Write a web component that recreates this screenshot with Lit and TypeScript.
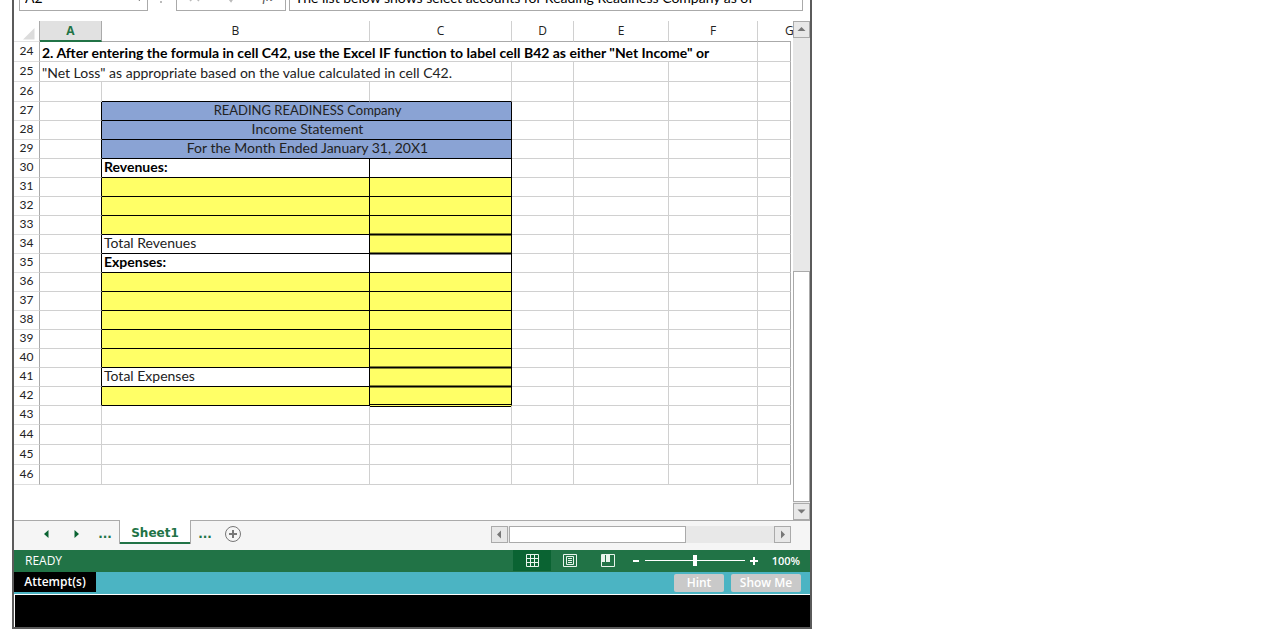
import { LitElement, html, css, svg, nothing } from "lit";
import { customElement } from "lit/decorators.js";

type Line = { n: number; label?: string; bold?: boolean; kind?: string };

const LINES: Line[] = [
  { n: 30, label: "Revenues:", bold: true },
  { n: 31, kind: "fill" },
  { n: 32, kind: "fill" },
  { n: 33, kind: "fill" },
  { n: 34, label: "Total Revenues", kind: "total" },
  { n: 35, label: "Expenses:", bold: true },
  { n: 36, kind: "fill" },
  { n: 37, kind: "fill" },
  { n: 38, kind: "fill" },
  { n: 39, kind: "fill" },
  { n: 40, kind: "fill" },
  { n: 41, label: "Total Expenses", kind: "total" },
  { n: 42, kind: "fill" },
];

// Cells of column C whose upper or lower edge carries a medium rule.
const HEAVY_TOP = new Set([34, 35, 41, 42]);
const HEAVY_BOTTOM = new Set([33, 34, 40, 41]);

const TITLES: [number, string, string][] = [
  [27, "READING READINESS Company", "caps"],
  [28, "Income Statement", ""],
  [29, "For the Month Ended January 31, 20X1", ""],
];

const arrow = (d: string) => html`<svg class="arrow" viewBox="0 0 15 15" width="15" height="15" aria-hidden="true">
  ${svg`<path d=${d} fill="#777"/>`}
</svg>`;

@customElement("sheet-grid")
class SheetGrid extends LitElement {
  static styles = css`
    :host { display: flex; font-family: Lato, "Open Sans", sans-serif; color: #222; }
    .area { flex: 1; min-width: 0; padding: 0 2px 35px 0; }
    table { width: 100%; table-layout: fixed; border-collapse: separate; border-spacing: 0; font-size: 14px; }
    th, td { box-sizing: border-box; padding: 0 0 2px; height: 19px; line-height: 16px; border: 0 solid #d0d0d0;
      border-width: 0 1px 1px 0; white-space: nowrap; overflow: hidden; }
    tr.tall th, tr.tall td { height: 20px; }
    .c0 { width: 26px; } .cA { width: 62px; } .cB { width: 268px; } .cC { width: 142px; }
    .cD { width: 62px; } .cE { width: 95px; } .cF { width: 89px; }
    thead th { height: 21px; padding: 0; font-size: 12px; font-weight: 400; border-bottom-color: #aaa; vertical-align: middle; font-family: "Open Sans", sans-serif; }
    thead th.corner { border-right-color: #aaa; border-bottom-color: #e2e2e2; text-align: right; }
    .corner svg { display: block; margin: 6px 4px 0 auto; }
    thead th.active { background: #e1e1e1; color: #217346; font-weight: 700; border-bottom: 2px solid #217346; border-right-color: #aaa; }
    thead th.last { text-align: left; padding-left: 27px; border-right: 0; overflow: visible; }
    tbody th { font-weight: 400; border-right-color: #aaa; font-size: 12px;
      border-bottom-color: #dedede; }
    td { padding-left: 2px; text-align: left; }
    td.end { border-right-color: #aaa; }
    td.strong { font-weight: 700; color: #000; }
    td.rb { border-right-color: #000; }
    td.bb { border-bottom-color: #000; }
    td.title { background: #8aa3d4; text-align: center; }
    td.caps { font-size: 13px; }
    td.yellow { background: #ffff66; }
    td.note { vertical-align: bottom; padding-bottom: 0; }
    td.ht { box-shadow: inset 0 1px rgba(0, 0, 0, .5); }
    td.hb { box-shadow: inset 0 -1px rgba(0, 0, 0, .5); }
    td.ht.hb { box-shadow: inset 0 1px rgba(0, 0, 0, .5), inset 0 -1px rgba(0, 0, 0, .5); }
    td.dbl { border-bottom-color: #ffff66; box-shadow: inset 0 1px rgba(0, 0, 0, .5), inset 0 -1px #000; }
    td.under { box-shadow: inset 0 1px #000; }
    .vbar { width: 17px; display: flex; flex-direction: column; background: #e8e8e8; }
    .vbar button { box-sizing: border-box; height: 17px; width: 17px; padding: 0; border: 1px solid #aaa; background: #e8e8e8; }
    .arrow { display: block; }
    .room { flex: 233; }
    .thumb { flex: 230; box-sizing: border-box; border: 1px solid #aaa; background: #fff; margin-bottom: 1px; }
  `;

  private tail = () => html`<td></td><td></td><td></td><td class="end"></td>`;

  private plain = (n: number, tall: boolean, b = "", c = "") => html`
    <tr class=${tall ? "tall" : ""}><th scope="row">${n}</th><td></td><td class=${b}></td><td class=${c}></td>${this.tail()}</tr>`;

  private line = (l: Line) => {
    const c = ["rb", "bb"];
    if (l.kind) c.push("yellow");
    if (HEAVY_TOP.has(l.n)) c.push("ht");
    if (HEAVY_BOTTOM.has(l.n)) c.push("hb");
    if (l.n === 42) c.push("dbl");
    const b = `rb bb ${l.kind === "fill" ? "yellow" : ""} ${l.bold ? "strong" : ""}`;
    return html`<tr><th scope="row">${l.n}</th><td class="rb"></td><td class=${b}>${l.label ?? nothing}</td>
      <td class=${c.join(" ")}></td>${this.tail()}</tr>`;
  };

  render() {
    return html`
      <div class="area">
        <table>
          <colgroup>
            <col class="c0"><col class="cA"><col class="cB"><col class="cC"><col class="cD"><col class="cE"><col class="cF"><col>
          </colgroup>
          <thead><tr>
            <th class="corner"><svg width="12" height="12" viewBox="0 0 12 12"><path d="M11.500 0V11.500H0z" fill="#dcdcdc"/></svg></th>
            <th class="active">A</th><th>B</th><th>C</th><th>D</th><th>E</th><th>F</th><th class="last">G</th>
          </tr></thead>
          <tbody>
            <tr class="tall"><th scope="row">24</th>
              <td class="note strong" colspan="6">2. After entering the formula in cell C42, use the Excel IF function to label cell B42 as either "Net Income" or</td>
              <td class="end"></td></tr>
            <tr class="tall"><th scope="row">25</th>
              <td class="note" colspan="3">"Net Loss" as appropriate based on the value calculated in cell C42.</td>${this.tail()}</tr>
            ${this.plain(26, true, "bb", "bb")}
            ${TITLES.map(([n, t, k]) => html`<tr><th scope="row">${n}</th><td class="rb"></td>
              <td class="title rb bb ${k}" colspan="2">${t}</td>${this.tail()}</tr>`)}
            ${LINES.map(this.line)}
            ${this.plain(43, false, "", "under")}
            ${[44, 45, 46].map((n) => this.plain(n, true))}
          </tbody>
        </table>
      </div>
      <div class="vbar">
        <button aria-label="Scroll up">${arrow("M3.500 9L7.500 5L11.500 9z")}</button>
        <div class="room"></div><div class="thumb"></div>
        <button aria-label="Scroll down">${arrow("M3.500 5.500H11.500L7.500 9.500z")}</button>
      </div>`;
  }
}

@customElement("app-root")
class AppRoot extends LitElement {
  static styles = css`
    :host { display: block; background: #fff; }
    .window { box-sizing: border-box; max-width: 800px; margin-left: 12px; border: 2px solid #5b5b5b; border-top: 0; background: #fff;
      font-family: "Open Sans", sans-serif; }
    button { font: inherit; padding: 0; border: 0; background: none; box-sizing: border-box; }
    .arrow { display: block; }
    .formula { display: flex; align-items: flex-end; height: 11px; overflow: hidden; margin-bottom: 10px; padding: 0 7px 0 5px; }
    .box { box-sizing: border-box; height: 28px; border: 1px solid #aaa; background: #fff; display: flex; align-items: center; }
    .formula input { font: 14px Lato, sans-serif; color: #000; border: 0; padding: 0 5px; width: 100%; min-width: 0; height: 26px; }
    .name { width: 129px; margin-right: 12px; }
    .dots { width: 2px; margin-right: 14px; height: 10px; display: flex; align-items: flex-start; }
    .dots::before { content: ""; width: 2px; height: 2px; background: #bbb; }
    .tools { width: 110px; margin-right: 3px; justify-content: space-around; font: italic 14px "Liberation Serif", serif; color: #555; }
    .tools svg { display: block; }
    .entry { flex: 1; min-width: 0; }
    .tabs { display: flex; height: 30px; box-sizing: border-box; background: #f5f5f5; box-shadow: inset 0 1px #aaa; align-items: flex-start; }
    .nav { display: flex; align-items: center; width: 105px; height: 28px; }
    .nav button, .more { color: #217346; }
    .nav button { width: 30px; height: 28px; }
    .nav .first { margin-left: 17px; }
    .nav svg, .add svg { display: block; margin: 0 auto; }
    .more { font: 700 12px/28px "DejaVu Sans", sans-serif; width: 28px; text-align: center; }
    .tabs .tab { width: 72px; height: 24px; padding-top: 1px; background: #fff; border: 1px solid #aaa; border-width: 0 1px; color: #217346;
      font: 700 12px "DejaVu Sans", sans-serif; box-shadow: inset 0 -2px #217346; }
    .add { width: 28px; height: 28px; }
    .hbar { display: flex; margin: 6px 19px 0 auto; width: 300px; height: 17px; background: #e8e8e8; }
    .hbar button { width: 17px; height: 17px; border: 1px solid #aaa; }
    .hthumb { flex: 176; box-sizing: border-box; border: 1px solid #aaa; background: #fff; margin-left: 1px; }
    .hroom { flex: 89; }
    .status { display: flex; align-items: center; height: 21px; padding: 0 10px 1px 11px; background: #217346; color: #fff; font-size: 11px; }
    .ready { margin-right: auto; font-size: 12px; }
    .view { width: 38px; height: 21px; display: flex; align-items: center; justify-content: center; }
    .view.on { background: #0a6332; }
    .zoom { width: 18px; height: 21px; display: flex; align-items: center; justify-content: center; }
    input.slide { -webkit-appearance: none; appearance: none; width: 100px; height: 11px; margin: 0;
      background: linear-gradient(#fff, #fff) center / 100% 1px no-repeat; }
    input.slide::-webkit-slider-thumb { -webkit-appearance: none; width: 4px; height: 11px; background: #fff; }
    .pct { font-weight: 600; width: 37px; text-align: right; }
    .attempts { display: flex; align-items: flex-start; height: 22px; background: #4bb4c3; font-size: 12px; font-weight: 600; color: #fff;
      padding-right: 9px; border-bottom: 1px solid #fff; }
    .label { background: #000; width: 82px; line-height: 20px; text-align: center; margin-right: auto; }
    .act { height: 18px; width: 50px; margin: 2px 0 0 7px; background: #c9c9c9; color: #fff; border-radius: 2px; line-height: 18px; }
    .act.wide { width: 70px; }
    .panel { height: 32px; background: #000; border-left: 1px solid #fff; }
  `;

  render() {
    return html`
      <div class="window">
        <div class="formula">
          <div class="box name"><input aria-label="Name box" value="A2">
            <svg width="16" height="24" viewBox="0 0 16 24"><path d="M2 11h9L6.500 17z" fill="#555"/></svg></div>
          <div class="dots"></div>
          <div class="box tools">
            <svg width="12" height="12" viewBox="0 0 12 12" stroke="#bbb" stroke-width="1.500"><path d="M1 1l9 9M10 1l-9 9"/></svg>
            <svg width="12" height="12" viewBox="0 0 12 12" stroke="#bbb" stroke-width="2" fill="none"><path d="M1 5l4 5l6-9"/></svg>
            <span>fx</span></div>
          <div class="box entry"><input aria-label="Formula" value="The list below shows select accounts for Reading Readiness Company as of"></div>
        </div>
        <sheet-grid></sheet-grid>
        <div class="tabs">
          <div class="nav">
            <button class="first" aria-label="Previous sheet"><svg width="5" height="8" viewBox="0 0 5 8"><path d="M4.500 0V8L0 4z" fill="#0a6332"/></svg></button>
            <button aria-label="Next sheet"><svg width="5" height="8" viewBox="0 0 5 8"><path d="M.5 0V8L5 4z" fill="#0a6332"/></svg></button>
            <span class="more">...</span>
          </div>
          <button class="tab">Sheet1</button>
          <span class="more">...</span>
          <button class="add" aria-label="Add sheet"><svg width="18" height="18" viewBox="0 0 18 18" fill="none" stroke="#777"><circle cx="9" cy="9" r="7.500"/><path d="M9 5v8M5 9h8" stroke-width="2"/></svg></button>
          <div class="hbar">
            <button aria-label="Scroll left">${arrow("M9 3.500V11.500L5 7.500z")}</button>
            <div class="hthumb"></div><div class="hroom"></div>
            <button aria-label="Scroll right">${arrow("M6 3.500V11.500L10 7.500z")}</button>
          </div>
        </div>
        <div class="status">
          <span class="ready">READY</span>
          <button class="view on" aria-label="Normal view"><svg width="13" height="13" viewBox="0 0 13 13" fill="none" stroke="#e8f4ec"><path d="M.5.5h12v12H.5zM4.500 0v13M8.500 0v13M0 4.500h13M0 8.500h13"/></svg></button>
          <button class="view" aria-label="Page layout"><svg width="14" height="13" viewBox="0 0 14 13" fill="none" stroke="#e8f4ec"><path d="M.5.5h13v12H.5zM3.500 2.500h7v8h-7zM5 4.500h4M5 6.500h4M5 8.500h4"/></svg></button>
          <button class="view" aria-label="Page break preview"><svg width="14" height="13" viewBox="0 0 14 13"><path d="M.5.5h13v12H.5z" fill="none" stroke="#e8f4ec"/><path d="M1 1h3v7H1zM5 1h4v7H5z" fill="#e8f4ec"/></svg></button>
          <button class="zoom" aria-label="Zoom out"><svg width="6" height="2"><path d="M0 0h6v2H0z" fill="#fff"/></svg></button>
          <input class="slide" type="range" aria-label="Zoom" min="0" max="200" value="100">
          <button class="zoom" aria-label="Zoom in"><svg width="8" height="8" viewBox="0 0 8 8"><path d="M3 0h2v3h3v2H5v3H3V5H0V3h3z" fill="#fff"/></svg></button>
          <span class="pct">100%</span>
        </div>
        <div class="attempts">
          <span class="label">Attempt(s)</span>
          <button class="act">Hint</button><button class="act wide">Show Me</button>
        </div>
        <div class="panel"></div>
      </div>`;
  }
}
